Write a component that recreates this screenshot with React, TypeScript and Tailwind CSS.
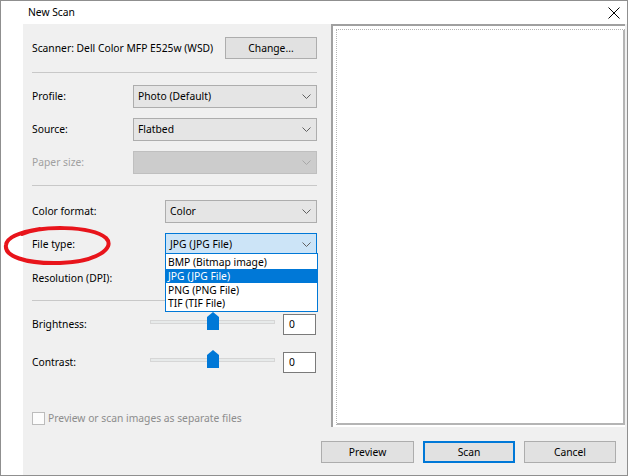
import React from "react";

const font = { fontFamily: '"Noto Sans", "Open Sans", sans-serif' };

function Chevron({ color = "#606060" }: { color?: string }) {
  return (
    <svg width="9" height="5" viewBox="0 0 9 5" className="shrink-0">
      <path d="M0.5 0.5 L4.5 4.5 L8.5 0.5" fill="none" stroke={color} strokeWidth="1" />
    </svg>
  );
}

function Select({
  text,
  className = "",
  disabled = false,
  focused = false,
}: {
  text?: string;
  className?: string;
  disabled?: boolean;
  focused?: boolean;
}) {
  const base = disabled
    ? "border-[#bfbfbf] bg-[#cccccc]"
    : focused
    ? "border-[#0078d7] bg-[#cce4f7]"
    : "border-[#adadad] bg-[#e5e5e5]";
  return (
    <div
      className={`flex h-[23px] items-center justify-between border pl-[4px] pr-[5px] ${base} ${className}`}
    >
      <span className="leading-none text-black">{text}</span>
      <Chevron color={disabled ? "#a8a8a8" : "#606060"} />
    </div>
  );
}

function Slider() {
  return (
    <div className="relative flex h-[20px] w-[125px] items-center">
      <div className="relative -top-[3px] h-[4px] w-full border border-[#d6d6d6] bg-[#e7eaea]" />
      <svg
        width="12"
        height="18"
        viewBox="0 0 12 18"
        className="absolute left-[57px] -top-[3px]"
      >
        <path d="M0 5 L6 0 L12 5 L12 18 L0 18 Z" fill="#0078d7" />
      </svg>
    </div>
  );
}

function NumBox() {
  return (
    <div className="flex h-[21px] w-[33px] items-center border border-[#7a7a7a] bg-white pl-[5px] leading-none">
      0
    </div>
  );
}

function Button({ label, primary = false, className = "" }: { label: string; primary?: boolean; className?: string }) {
  return (
    <div
      className={`flex h-[22px] items-center justify-center bg-[#e1e1e1] leading-none text-black ${
        primary ? "border-2 border-[#0078d7]" : "border border-[#adadad]"
      } ${className}`}
    >
      {label}
    </div>
  );
}

function Sep({ className = "" }: { className?: string }) {
  return <div className={`h-[1px] bg-[#c8c8c8] ${className}`} />;
}

export default function App() {
  return (
    <div className="relative h-[476px] w-[628px] select-none overflow-hidden text-[10.3px] text-black" style={font}>
      <div className="flex h-full w-full flex-col border border-[#8f8f8f] bg-white">
        {/* Title bar */}
        <div className="flex h-[23px] shrink-0 items-center justify-between pl-[27px] pr-[7px]">
          <span className="leading-none">New Scan</span>
          <svg width="12" height="12" viewBox="0 0 12 12">
            <path d="M0.5 0.5 L11.5 11.5 M11.5 0.5 L0.5 11.5" stroke="#000" strokeWidth="1" />
          </svg>
        </div>

        {/* Body */}
        <div className="ml-[22px] flex flex-1 flex-col bg-[#f0f0f0]">
          <div className="flex h-[403px] shrink-0">
            {/* Left column */}
            <div className="relative flex w-[308px] shrink-0 flex-col pl-[9px] pr-[14px]">
              <div className="mt-[14px] flex h-[20px] items-center justify-between">
                <span className="whitespace-nowrap leading-none">Scanner: Dell Color MFP E525w (WSD)</span>
                <Button label="Change..." className="h-[20px] w-[92px]" />
              </div>
              <Sep className="mt-[14px]" />

              <div className="mt-[12px] flex items-center">
                <span className="w-[101px] leading-none">Profile:</span>
                <Select text="Photo (Default)" className="flex-1" />
              </div>
              <div className="mt-[10px] flex items-center">
                <span className="w-[101px] leading-none">Source:</span>
                <Select text="Flatbed" className="flex-1" />
              </div>
              <div className="mt-[10px] flex items-center">
                <span className="w-[101px] leading-none text-[#a0a0a0]">Paper size:</span>
                <Select disabled className="flex-1" />
              </div>
              <Sep className="mt-[11px]" />

              <div className="mt-[14px] flex items-center">
                <span className="w-[133px] leading-none">Color format:</span>
                <Select text="Color" className="flex-1" />
              </div>
              <div className="mt-[10px] flex items-center">
                <span className="w-[133px] leading-none">File type:</span>
                <Select text="JPG (JPG File)" focused className="flex-1" />
              </div>
              <div className="mt-[11px] flex h-[23px] items-center">
                <span className="w-[133px] leading-none">Resolution (DPI):</span>
              </div>
              <Sep className="mt-[10px]" />

              <div className="mt-[13px] flex items-center">
                <span className="w-[118px] leading-none">Brightness:</span>
                <Slider />
                <div className="w-[8px]" />
                <NumBox />
              </div>
              <div className="mt-[17px] flex items-center">
                <span className="w-[118px] leading-none">Contrast:</span>
                <Slider />
                <div className="w-[8px]" />
                <NumBox />
              </div>

              <div className="mt-[39px] flex items-center">
                <div className="h-[13px] w-[13px] border border-[#bcbcbc] bg-[#fcfcfc]" />
                <span className="ml-[3px] leading-none text-[#8d8d8d]">Preview or scan images as separate files</span>
              </div>

              {/* Dropdown list (open) */}
              <div className="absolute left-[142px] top-[229px] z-10 flex w-[153px] flex-col border border-[#0078d7] bg-white py-[1px]">
                <div className="flex h-[14px] items-center pl-[2px] leading-none">BMP (Bitmap image)</div>
                <div className="flex h-[14px] items-center bg-[#0078d7] pl-[2px] leading-none text-white">JPG (JPG File)</div>
                <div className="flex h-[14px] items-center pl-[2px] leading-none">PNG (PNG File)</div>
                <div className="flex h-[13px] items-center pl-[2px] leading-none">TIF (TIF File)</div>
              </div>
            </div>

            {/* Preview frame */}
            <div className="mr-[2px] flex flex-1 border-l-2 border-t-2 border-[#a0a0a0] bg-white pb-[2px] pl-[3px] pt-[3px]">
              <div className="flex-1 border border-b-2 border-r-2 border-dotted border-[#b4b4b4] [border-bottom-style:solid] [border-right-style:solid]" />
            </div>
          </div>

          {/* Buttons */}
          <div className="mt-[14px] flex justify-end gap-[9px] pr-[11px]">
            <Button label="Preview" className="w-[93px]" />
            <Button label="Scan" primary className="w-[92px]" />
            <Button label="Cancel" className="w-[92px]" />
          </div>
        </div>
      </div>

      {/* Red annotation ellipse */}
      <svg className="pointer-events-none absolute left-0 top-[220px]" width="120" height="50" viewBox="0 0 120 50">
        <path
          d="M22 14 C 40 6, 90 5, 106 18 C 116 28, 96 42, 60 43 C 25 44, 4 36, 6 25 C 7 17, 20 12, 40 9"
          fill="none"
          stroke="#e8141b"
          strokeWidth="4"
          strokeLinecap="round"
        />
      </svg>
    </div>
  );
}
